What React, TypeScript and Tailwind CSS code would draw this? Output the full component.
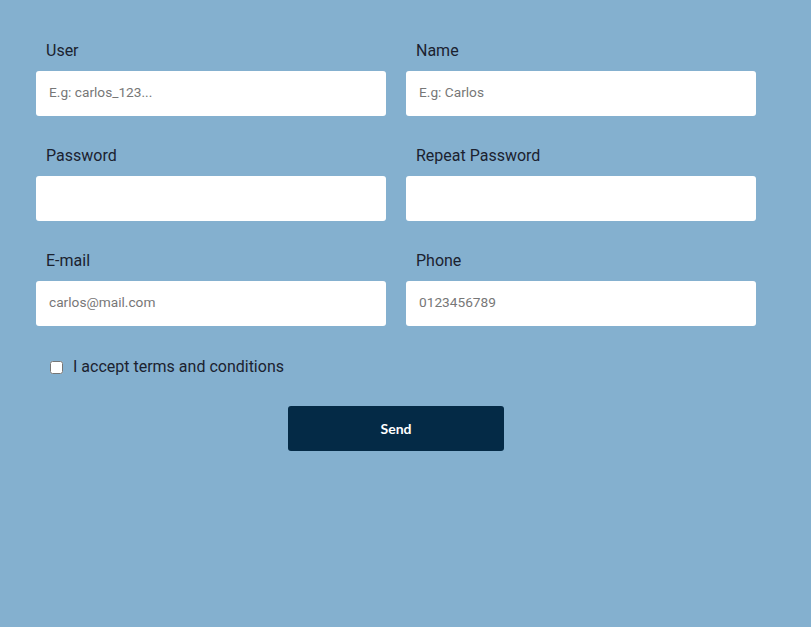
import React from 'react';

const fields = [
  { label: 'User', placeholder: 'E.g: carlos_123...', type: 'text' },
  { label: 'Name', placeholder: 'E.g: Carlos', type: 'text' },
  { label: 'Password', placeholder: '', type: 'password' },
  { label: 'Repeat Password', placeholder: '', type: 'password' },
  { label: 'E-mail', placeholder: 'carlos@mail.com', type: 'email' },
  { label: 'Phone', placeholder: '0123456789', type: 'tel' },
];

export default function App() {
  return (
    <div className="min-h-[627px] w-full bg-[#84b0cf] font-['Roboto',sans-serif]">
      <form className="w-[720px] ml-[36px] pt-[39px]" onSubmit={(e) => e.preventDefault()}>
        <div className="grid grid-cols-2 gap-x-[20px] gap-y-[28px]">
          {fields.map((f) => (
            <div key={f.label} className="flex flex-col">
              <label className="pl-[10px] text-[16px] leading-[24px] text-[#1b2230] mb-[8px]">{f.label}</label>
              <input
                type={f.type}
                placeholder={f.placeholder}
                className="h-[45px] w-full rounded-[3px] bg-white px-[13px] pb-[3px] text-[13.7px] text-[#333] placeholder:text-[#777] outline-none"
              />
            </div>
          ))}
        </div>
        <label className="mt-[29px] ml-[14px] flex items-center gap-[10px] text-[16px] leading-[24px] text-[#1b2230]">
          <input type="checkbox" className="h-[13px] w-[13px]" />
          I accept terms and conditions
        </label>
        <div className="mt-[27px] flex justify-center">
          <button
            type="submit"
            className="h-[45px] w-[216px] rounded-[3px] bg-[#042a46] text-[14px] font-bold text-white font-['Lato',sans-serif]"
          >
            Send
          </button>
        </div>
      </form>
    </div>
  );
}
